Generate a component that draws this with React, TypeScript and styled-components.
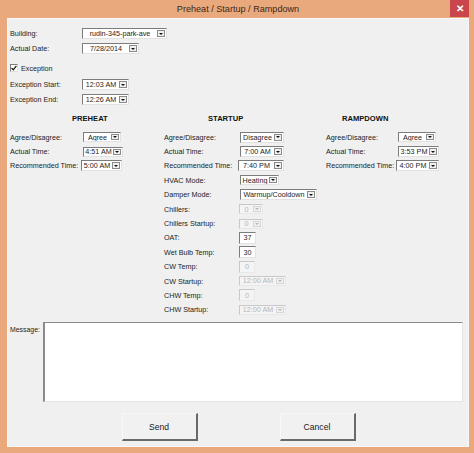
import React from "react";
import styled, { createGlobalStyle } from "styled-components";

const GlobalStyle = createGlobalStyle`
  html, body {
    margin: 0;
    padding: 0;
    background: #e9a97c;
  }
  * {
    box-sizing: border-box;
  }
`;

const Window = styled.div`
  width: 474px;
  height: 453px;
  display: flex;
  flex-direction: column;
  background: #e9a97c;
  padding: 0 5px 6px 7px;
  font-family: "Liberation Sans", Arial, sans-serif;
  color: #1c1c1c;
`;

const TitleBar = styled.div`
  position: relative;
  height: 18px;
  flex: none;
  display: flex;
  align-items: center;
  justify-content: center;
  font-size: 9.1px;
  color: #3a2a20;
`;

const CloseButton = styled.div`
  position: absolute;
  top: 0;
  right: 0;
  width: 19px;
  height: 17px;
  background: #c9464c;
  color: #fff;
  font-size: 10px;
  font-weight: bold;
  display: flex;
  align-items: center;
  justify-content: center;
`;

const Body = styled.div`
  flex: 1;
  display: flex;
  flex-direction: column;
  background: #f0f0f0;
  border: 1px solid #f8f8f8;
  padding: 7px 0 4px 1px;
  font-size: 7.2px;
`;

const Row = styled.div<{ $h?: number; $mt?: number }>`
  display: flex;
  align-items: center;
  height: ${(p) => p.$h ?? 15}px;
  margin-top: ${(p) => p.$mt ?? 0}px;
  padding-left: 1px;
  flex: none;
`;

const Label = styled.span<{ $w: number }>`
  min-width: ${(p) => p.$w}px;
  padding-right: 2px;
  flex: none;
  white-space: nowrap;
  line-height: 1;
`;

const Combo = styled.div<{ $w: number; $h?: number; $off?: number; $disabled?: boolean }>`
  width: ${(p) => p.$w}px;
  height: ${(p) => p.$h ?? 11}px;
  margin-left: ${(p) => p.$off ?? 0}px;
  display: flex;
  align-items: stretch;
  background: ${(p) => (p.$disabled ? "#f4f4f4" : "#fff")};
  border: 1px solid;
  border-color: ${(p) =>
    p.$disabled ? "#c8c8c8 #e8e8e8 #e8e8e8 #c8c8c8" : "#7c7c7c #e2e2e2 #e2e2e2 #7c7c7c"};
  color: ${(p) => (p.$disabled ? "#b4b4b4" : "#1c1c1c")};
`;

const ComboValue = styled.span`
  flex: 1;
  display: flex;
  align-items: center;
  justify-content: center;
  white-space: nowrap;
  overflow: hidden;
  line-height: 1;
`;

const ComboArrow = styled.span<{ $disabled?: boolean }>`
  width: 8px;
  margin: 1px 1px 1px 0;
  flex: none;
  display: flex;
  align-items: center;
  justify-content: center;
  background: #f0f0f0;
  border: 1px solid ${(p) => (p.$disabled ? "#d6d6d6" : "#8a8a8a")};

  &::after {
    content: "";
    border-left: 2px solid transparent;
    border-right: 2px solid transparent;
    border-top: 2px solid ${(p) => (p.$disabled ? "#b8b8b8" : "#111")};
  }
`;

const TextBox = styled.div<{ $w: number; $disabled?: boolean }>`
  width: ${(p) => p.$w}px;
  height: 12px;
  display: flex;
  align-items: center;
  justify-content: center;
  background: ${(p) => (p.$disabled ? "#f4f4f4" : "#fff")};
  border: 1px solid;
  border-color: ${(p) =>
    p.$disabled ? "#c8c8c8 #e8e8e8 #e8e8e8 #c8c8c8" : "#7c7c7c #e2e2e2 #e2e2e2 #7c7c7c"};
  color: ${(p) => (p.$disabled ? "#b4b4b4" : "#1c1c1c")};
  line-height: 1;
`;

const CheckRow = styled.label`
  display: flex;
  align-items: center;
  gap: 3px;
  height: 14px;
  margin-top: 5px;
  padding-left: 1px;
  flex: none;
`;

const CheckBox = styled.span`
  width: 8px;
  height: 8px;
  display: flex;
  align-items: center;
  justify-content: center;
  background: #fff;
  border: 1px solid;
  border-color: #7c7c7c #e2e2e2 #e2e2e2 #7c7c7c;
`;

const Columns = styled.div`
  display: grid;
  grid-template-columns: 154px 162px 1fr;
  margin-top: 5px;
`;

const Column = styled.div`
  display: flex;
  flex-direction: column;
`;

const Heading = styled.div<{ $ml: number }>`
  height: 12px;
  margin-left: ${(p) => p.$ml}px;
  margin-bottom: 6px;
  display: flex;
  align-items: center;
  font-size: 7.6px;
  font-weight: bold;
  color: #111;
`;

const SectionRow = styled(Row)`
  height: 14.4px;
`;

const MessageArea = styled.div`
  display: flex;
  margin-top: 5px;
  height: 80px;
  padding-right: 5px;
`;

const MessageLabel = styled.span`
  width: 34px;
  font-size: 6.9px;
  padding: 4px 0 0 1px;
`;

const MessageBox = styled.div`
  flex: 1;
  background: #fff;
  border: 1px solid;
  border-width: 1px 1px 1px 2px;
  border-color: #8a8a8a #e4e4e4 #e4e4e4 #8a8a8a;
`;

const ButtonBar = styled.div`
  display: flex;
  justify-content: center;
  gap: 82px;
  margin-top: 11px;
`;

const Button = styled.button`
  width: 76px;
  height: 28px;
  background: #f1f1f1;
  border: 1px solid;
  border-width: 1px 2px 2px 1px;
  border-color: #f8f8f8 #6a6a6a #6a6a6a #f8f8f8;
  font-family: "Liberation Sans", Arial, sans-serif;
  font-size: 8.6px;
  color: #1c1c1c;
  padding: 0;
`;

type Field =
  | { label: string; kind: "combo"; value: string; w: number; off?: number; disabled?: boolean }
  | { label: string; kind: "text"; value: string; w: number; disabled?: boolean };

const DropDown: React.FC<{ value: string; w: number; h?: number; off?: number; disabled?: boolean }> = ({
  value,
  w,
  h,
  off,
  disabled,
}) => (
  <Combo $w={w} $h={h} $off={off} $disabled={disabled}>
    <ComboValue>{value}</ComboValue>
    <ComboArrow $disabled={disabled} />
  </Combo>
);

const preheat: Field[] = [
  { label: "Agree/Disagree:", kind: "combo", value: "Agree", w: 38, off: 1 },
  { label: "Actual Time:", kind: "combo", value: "4:51 AM", w: 40, off: 1 },
  { label: "Recommended Time:", kind: "combo", value: "5:00 AM", w: 41, off: -1 },
];

const startup: Field[] = [
  { label: "Agree/Disagree:", kind: "combo", value: "Disagree", w: 44, off: 1 },
  { label: "Actual Time:", kind: "combo", value: "7:00 AM", w: 44, off: 1 },
  { label: "Recommended Time:", kind: "combo", value: "7:40 PM", w: 46, off: -1 },
  { label: "HVAC Mode:", kind: "combo", value: "Heating", w: 39, off: 1 },
  { label: "Damper Mode:", kind: "combo", value: "Warmup/Cooldown", w: 77, off: 1 },
  { label: "Chillers:", kind: "combo", value: "0", w: 24, disabled: true },
  { label: "Chillers Startup:", kind: "combo", value: "0", w: 24, disabled: true },
  { label: "OAT:", kind: "text", value: "37", w: 17 },
  { label: "Wet Bulb Temp:", kind: "text", value: "30", w: 17 },
  { label: "CW Temp:", kind: "text", value: "0", w: 16, disabled: true },
  { label: "CW Startup:", kind: "combo", value: "12:00 AM", w: 47, disabled: true },
  { label: "CHW Temp:", kind: "text", value: "0", w: 16, disabled: true },
  { label: "CHW Startup:", kind: "combo", value: "12:00 AM", w: 47, disabled: true },
];

const rampdown: Field[] = [
  { label: "Agree/Disagree:", kind: "combo", value: "Agree", w: 38 },
  { label: "Actual Time:", kind: "combo", value: "3:53 PM", w: 41 },
  { label: "Recommended Time:", kind: "combo", value: "4:00 PM", w: 43, off: -2 },
];

const Section: React.FC<{ title: string; titleOffset: number; labelWidth: number; fields: Field[] }> = ({
  title,
  titleOffset,
  labelWidth,
  fields,
}) => (
  <Column>
    <Heading $ml={titleOffset}>{title}</Heading>
    {fields.map((f) => (
      <SectionRow key={f.label}>
        <Label $w={labelWidth}>{f.label}</Label>
        {f.kind === "combo" ? (
          <DropDown value={f.value} w={f.w} h={f.w > 40 && !f.disabled ? 11 : 10} off={f.off} disabled={f.disabled} />
        ) : (
          <TextBox $w={f.w} $disabled={f.disabled}>
            {f.value}
          </TextBox>
        )}
      </SectionRow>
    ))}
  </Column>
);

export default function App() {
  return (
    <>
      <GlobalStyle />
      <Window>
        <TitleBar>
          Preheat / Startup / Rampdown
          <CloseButton>✕</CloseButton>
        </TitleBar>
        <Body>
          <Row>
            <Label $w={72}>Building:</Label>
            <DropDown value="rudin-345-park-ave" w={85} />
          </Row>
          <Row>
            <Label $w={72}>Actual Date:</Label>
            <DropDown value="7/28/2014" w={57} />
          </Row>
          <CheckRow>
            <CheckBox>
              <svg width="6" height="6" viewBox="0 0 6 6">
                <path d="M0.6 3 L2.3 4.8 L5.4 0.9" fill="none" stroke="#111" strokeWidth="1.2" />
              </svg>
            </CheckBox>
            Exception
          </CheckRow>
          <Row $mt={2}>
            <Label $w={72}>Exception Start:</Label>
            <DropDown value="12:03 AM" w={47} />
          </Row>
          <Row>
            <Label $w={72}>Exception End:</Label>
            <DropDown value="12:26 AM" w={47} />
          </Row>
          <Columns>
            <Section title="PREHEAT" titleOffset={63} labelWidth={72} fields={preheat} />
            <Section title="STARTUP" titleOffset={45} labelWidth={75} fields={startup} />
            <Section title="RAMPDOWN" titleOffset={17} labelWidth={72} fields={rampdown} />
          </Columns>
          <MessageArea>
            <MessageLabel>Message:</MessageLabel>
            <MessageBox />
          </MessageArea>
          <ButtonBar>
            <Button>Send</Button>
            <Button>Cancel</Button>
          </ButtonBar>
        </Body>
      </Window>
    </>
  );
}
